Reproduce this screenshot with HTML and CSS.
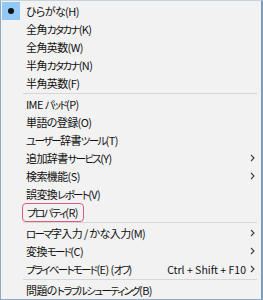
FILE: index.html
```html
<!DOCTYPE html>
<html lang="ja">
<head>
<meta charset="utf-8">
<link rel="stylesheet" href="styles.css">
</head>
<body>
<div class="menu">
  <div class="item checked"><span class="mark"><span class="dot"></span></span><span class="label">ひらがな(H)</span></div>
  <div class="item"><span class="mark"></span><span class="label"><span class="j">全角</span><span class="k">カタカナ</span>(K)</span></div>
  <div class="item"><span class="mark"></span><span class="label">全角英数(W)</span></div>
  <div class="item"><span class="mark"></span><span class="label"><span class="j">半角</span><span class="k">カタカナ</span>(N)</span></div>
  <div class="item"><span class="mark"></span><span class="label">半角英数(F)</span></div>
  <div class="sep"></div>
  <div class="item"><span class="mark"></span><span class="label">IME <span class="k">パッド</span>(P)</span></div>
  <div class="item"><span class="mark"></span><span class="label">単語の登録(O)</span></div>
  <div class="item"><span class="mark"></span><span class="label"><span class="k">ユーザー</span>辞書<span class="k">ツール</span>(T)</span></div>
  <div class="item"><span class="mark"></span><span class="label">追加辞書<span class="k">サービス</span>(Y)</span><svg class="arrow" viewBox="0 0 5 8" width="5" height="8"><polyline points="1,1 4,4 1,7" fill="none" stroke="#3c3c3c" stroke-width="1.1"/></svg></div>
  <div class="item"><span class="mark"></span><span class="label">検索機能(S)</span><svg class="arrow" viewBox="0 0 5 8" width="5" height="8"><polyline points="1,1 4,4 1,7" fill="none" stroke="#3c3c3c" stroke-width="1.1"/></svg></div>
  <div class="item"><span class="mark"></span><span class="label">誤変換<span class="k">レポート</span>(V)</span></div>
  <div class="item"><span class="mark"></span><span class="label boxed"><span class="k">プロパティ</span>(R)</span></div>
  <div class="sep"></div>
  <div class="item"><span class="mark"></span><span class="label"><span class="k">ローマ</span>字入力 / かな入力(M)</span><svg class="arrow" viewBox="0 0 5 8" width="5" height="8"><polyline points="1,1 4,4 1,7" fill="none" stroke="#3c3c3c" stroke-width="1.1"/></svg></div>
  <div class="item"><span class="mark"></span><span class="label">変換<span class="k">モード</span>(C)</span><svg class="arrow" viewBox="0 0 5 8" width="5" height="8"><polyline points="1,1 4,4 1,7" fill="none" stroke="#3c3c3c" stroke-width="1.1"/></svg></div>
  <div class="item"><span class="mark"></span><span class="label"><span class="k">プライベートモード</span>(E) (<span class="k">オフ</span>)</span><span class="accel">Ctrl + Shift + F10</span><svg class="arrow" viewBox="0 0 5 8" width="5" height="8"><polyline points="1,1 4,4 1,7" fill="none" stroke="#3c3c3c" stroke-width="1.1"/></svg></div>
  <div class="sep"></div>
  <div class="item"><span class="mark"></span><span class="label">問題の<span class="k">トラブルシューティング</span>(B)</span></div>
</div>
</body>
</html>
```

FILE: styles.css
```css
html, body {
  margin: 0;
  padding: 0;
  background: #f2f2f2;
}
.menu {
  width: 263px;
  height: 300px;
  box-sizing: border-box;
  background: #f2f2f2;
  border: 1px solid #8fa9c4;
  border-right: 2px solid #7d9dbd;
  border-top-color: #c5d3e0;
  padding-top: 1px;
  font-family: "Noto Sans CJK JP", sans-serif;
  font-size: 11px;
  font-feature-settings: "palt";
  color: #111;
  overflow: hidden;
}
.item {
  display: flex;
  align-items: center;
  height: 18px;
  padding-left: 1px;
  padding-right: 6px;
  white-space: nowrap;
}
.mark {
  flex: 0 0 18px;
  height: 18px;
  margin-right: 6px;
  display: flex;
  align-items: center;
  justify-content: center;
}
.checked .mark {
  background: #92c8f5;
}
.dot {
  width: 6px;
  height: 6px;
  border-radius: 50%;
  background: #111;
}
.label {
  flex: 1;
  letter-spacing: -0.6px;
}
.k {
  font-size: 10.5px;
  letter-spacing: -1.7px;
}
.label.boxed {
  flex: 0 0 auto;
  height: 17px;
  line-height: 17px;
  margin-left: -4px;
  padding: 0 5px 0 4px;
  border: 1.5px solid #de5a7e;
  border-radius: 4px;
}
.accel {
  margin-right: 4px;
  font-size: 10.5px;
  letter-spacing: 0;
}
.arrow {
  flex: 0 0 5px;
}
.sep {
  height: 1px;
  background: #d6d6d6;
  margin: 1px 4px 1px 22px;
}
```
